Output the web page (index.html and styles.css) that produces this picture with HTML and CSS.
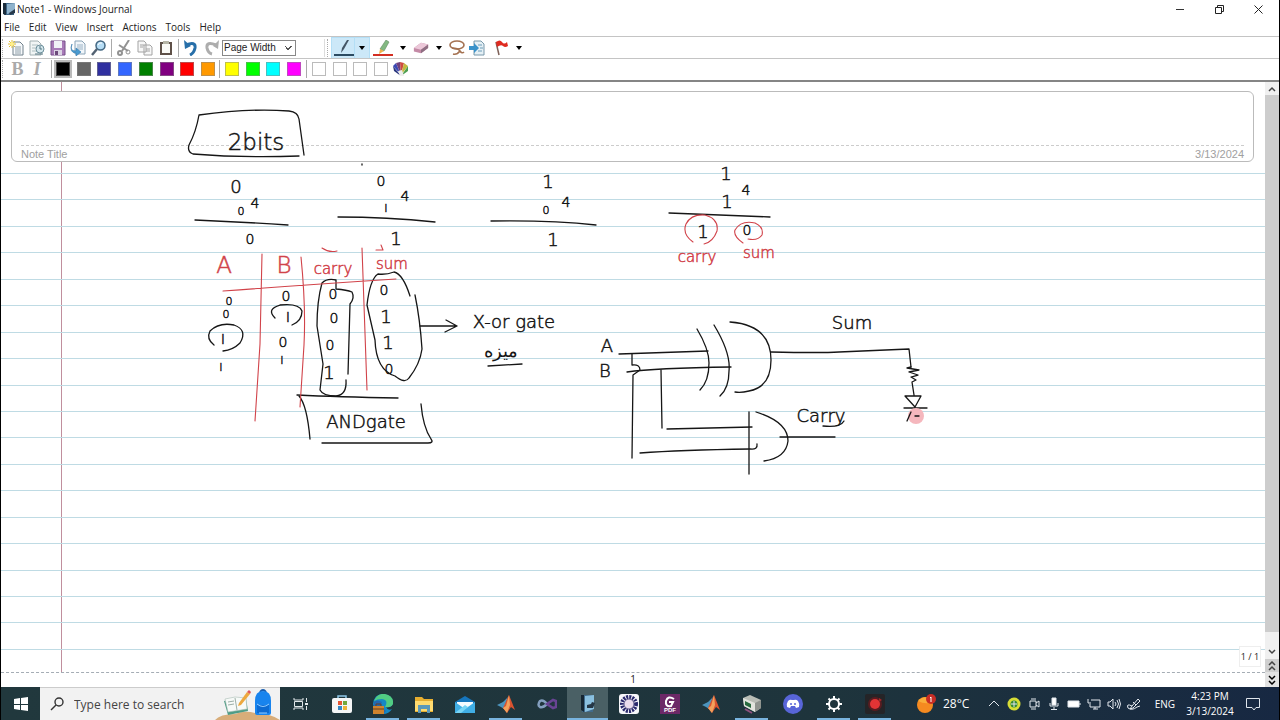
FILE: index.html
```html
<!DOCTYPE html>
<html lang="en">
<head>
<meta charset="utf-8">
<title>Note1 - Windows Journal</title>
<link rel="stylesheet" href="styles.css">
</head>
<body>
<div class="window">
  <header class="titlebar">
    <svg class="app-icon" viewBox="0 0 14 14"><path d="M1 1h11v12H2z" fill="#3d6484"/><path d="M5 2l8-1v9l-8 2z" fill="#8fb3cd"/><path d="M1 1l3 0v12l-3-1z" fill="#1b2c3b"/><path d="M7 11l6-4v4l-5 2z" fill="#27394a"/></svg>
    <h1 class="title">Note1 - Windows Journal</h1>
    <div class="win-buttons">
      <button aria-label="Minimize"><svg width="9" height="9"><path d="M0 4.500h8" stroke="#333"/></svg></button>
      <button aria-label="Restore"><svg width="9" height="9" fill="none" stroke="#222"><path d="M.5 2.500h6v6h-6zM2.500 2V.5h6v6H7"/></svg></button>
      <button aria-label="Close"><svg width="9" height="9" stroke="#222"><path d="M.5.5l8 8M8.500.5l-8 8"/></svg></button>
    </div>
  </header>
  <nav class="menubar">
    <button>File</button><button>Edit</button><button>View</button><button>Insert</button><button>Actions</button><button>Tools</button><button>Help</button>
  </nav>

  <div class="toolbar">
    <span class="grip"></span>
    <div class="tools file-tools">
      <button aria-label="New note"><svg viewBox="0 0 16 16"><path d="M5 2h7l3 3v10H5z" fill="#f7f9fb" stroke="#71818c"/><path d="M7 7h6M7 9h6M7 11h6M7 13h6" stroke="#8fa0aa"/><path d="M4 0v8M0 4h8M1 1l6 6M7 1L1 7" stroke="#e0bc36"/><circle cx="4" cy="4" r="2" fill="#fff08a"/></svg></button>
      <button aria-label="Note from template"><svg viewBox="0 0 16 16"><path d="M1 1h8l3 3v11H1z" fill="#f1f5f5" stroke="#a2b0b2"/><path d="M3 5h6M3 8h6M3 11h6" stroke="#aebfc1"/><circle cx="11" cy="9" r="4" fill="#d3e6ec" stroke="#6e909c"/><path d="M11 6v3h2M6 14h8" fill="none" stroke="#527480"/></svg></button>
      <button aria-label="Save"><svg viewBox="0 0 16 16"><path d="M1 1h14v14H1z" fill="#a87ab8" stroke="#76508a"/><path d="M4 1h8v7H4z" fill="#f1f1f7"/><path d="M4 10h8v5H4z" fill="#dbd4e4"/><path d="M5 11h3v4H5z" fill="#6c4a7b"/></svg></button>
      <button aria-label="Import"><svg viewBox="0 0 16 16"><path d="M5 1h7l3 3v10H5z" fill="#f1f6fa" stroke="#8ba4b7"/><path d="M7 5h6M7 7h6M7 9h6" stroke="#9bb3c6"/><path d="M2 4q-3 7 4 7V8l5 4-5 4v-3Q-1 13 2 4z" fill="#4a9bd1" stroke="#357bac" stroke-width=".6"/></svg></button>
      <button aria-label="Find"><svg viewBox="0 0 16 16"><path d="M6 9l-5 6" stroke="#536272" stroke-width="2.500"/><circle cx="9.500" cy="5.500" r="4.500" fill="#b6ddf5" stroke="#426681" stroke-width="1.500"/><path d="M7 5q1-3 4-2" stroke="#fff" fill="none"/></svg></button>
    </div>
    <span class="sep"></span>
    <div class="tools edit-tools">
      <button aria-label="Cut"><svg viewBox="0 0 16 16" fill="none" stroke="#929292" stroke-width="2"><path d="M13 0L6 11M3 5l9 6"/><circle cx="4" cy="13" r="2"/><circle cx="12" cy="12" r="2" stroke-width="1"/></svg></button>
      <button aria-label="Copy"><svg viewBox="0 0 16 16" fill="#f7f7f7" stroke="#a3a3a3"><path d="M1 1h6l2 2v9H1zM7 5h6l2 2v8H7z"/><path d="M3 5h4M3 7h3M9 9h4M9 11h4"/></svg></button>
      <button aria-label="Paste"><svg viewBox="0 0 16 16"><path d="M2 2h12v13H2z" fill="#5f5148"/><path d="M4 4h8v9H4z" fill="#fbfbf7"/><path d="M5 1h6v3H5z" fill="#b7b6a7"/></svg></button>
    </div>
    <span class="sep"></span>
    <div class="tools undo-tools">
      <button aria-label="Undo"><svg viewBox="0 0 16 16"><path d="M3 5q10-4 9 3-1 5-5 7" fill="none" stroke="#276fa9" stroke-width="3"/><path d="M1 0l1 9 6-3z" fill="#276fa9"/></svg></button>
      <button aria-label="Redo"><svg viewBox="0 0 16 16"><path d="M12 5q-10-4-9 3 1 5 5 6" fill="none" stroke="#adadad" stroke-width="3"/><path d="M15 0l-1 9-5-3z" fill="#adadad"/></svg></button>
    </div>
    <select class="zoom" aria-label="Zoom"><option>Page Width</option></select>
    <span class="grip second"></span>
    <div class="pen-tools">
      <button class="pen active" aria-label="Pen"><svg viewBox="0 0 20 16"><path d="M15 0l-5 9-3 4 1-5 5-8z" fill="#435565"/><path d="M0 15h20" stroke="#2b4a61" stroke-width="2"/></svg></button>
      <button class="drop active split" aria-label="Pen options"></button>
      <button class="pen" aria-label="Highlighter"><svg viewBox="0 0 20 16"><path d="M13 0l3 2-5 9-4-2z" fill="#83b982" stroke="#648c65" stroke-width=".6"/><path d="M7 9l4 2-5 3z" fill="#edb34c"/><path d="M0 15h20" stroke="#d32e22" stroke-width="2"/></svg></button>
      <button class="drop" aria-label="Highlighter options"></button>
      <button class="icon-eraser" aria-label="Eraser"><svg viewBox="0 0 18 16"><path d="M1 8l8-6 8 2v4l-8 6-8-2z" fill="#c48aa6"/><path d="M1 8l8-6 8 2-8 6z" fill="#ecc8d9"/><path d="M9 10v4l8-6V4z" fill="#8f6f83"/></svg></button>
      <button class="drop" aria-label="Eraser options"></button>
      <button aria-label="Selection"><svg viewBox="0 0 16 16" fill="none" stroke="#a47150" stroke-width="1.600"><ellipse cx="8" cy="5" rx="7" ry="4"/><path d="M3 8q6 0 8 3t4 1M11 11q-3 4-7 3"/></svg></button>
      <button aria-label="Insert space"><svg viewBox="0 0 16 16"><path d="M5 1h7l3 3v11H5z" fill="#e5f0f5" stroke="#7898aa"/><path d="M9 5h4M11 8h3M9 11h4" stroke="#6d9cb8"/><path d="M0 6h5V3l5 5-5 5v-3H0z" fill="#3992ca"/></svg></button>
      <button class="flag" aria-label="Flag"><svg viewBox="0 0 16 16"><path d="M3 2l3 13" stroke="#7e6158" stroke-width="1.500"/><path d="M3 2q4-3 6 0t5 0l1 4q-3 2-5 0T4 7z" fill="#df2b20"/></svg></button>
      <button class="drop" aria-label="Flag options"></button>
    </div>
  </div>

  <div class="toolbar formatting">
    <span class="grip"></span>
    <button class="letter bold">B</button>
    <button class="letter italic">I</button>
    <span class="sep"></span>
    <div class="swatches eight">
      <button class="swatch black chosen" aria-label="Black"></button><button class="swatch gray" aria-label="Gray"></button><button class="swatch navy" aria-label="Navy"></button><button class="swatch blue" aria-label="Blue"></button><button class="swatch green" aria-label="Green"></button><button class="swatch purple" aria-label="Purple"></button><button class="swatch red" aria-label="Red"></button><button class="swatch orange" aria-label="Orange"></button>
    </div>
    <span class="sep"></span>
    <div class="swatches four">
      <button class="swatch yellow" aria-label="Yellow"></button><button class="swatch lime" aria-label="Lime"></button><button class="swatch cyan" aria-label="Cyan"></button><button class="swatch magenta" aria-label="Magenta"></button>
    </div>
    <span class="sep"></span>
    <div class="swatches four">
      <button class="swatch empty" aria-label="Custom 1"></button><button class="swatch empty" aria-label="Custom 2"></button><button class="swatch empty" aria-label="Custom 3"></button><button class="swatch empty" aria-label="Custom 4"></button>
    </div>
    <button class="palette" aria-label="More colors"><svg viewBox="0 0 16 14"><path d="M0 4l3-3 5 12z" fill="#3b48b5"/><path d="M0 4l1 5 7 5z" fill="#28357c"/><path d="M3 1l4-1 1 13z" fill="#71407c"/><path d="M7 0l4 1-3 12z" fill="#ce4b41"/><path d="M11 1l4 3-7 9z" fill="#c4b73e"/><path d="M15 4l0 5-7 5z" fill="#4c9e50"/><path d="M5 9l4-1 2 6H7z" fill="#eee"/></svg></button>
  </div>

  <main class="workspace">
    <section class="page">
      <div class="note-head">
        <div class="note-line"></div>
        <div class="note-meta"><span>Note Title</span><time>3/13/2024</time></div>
      </div>
      <div class="rules"><i></i><i></i><i></i><i></i><i></i><i></i><i></i><i></i><i></i><i></i><i></i><i></i><i></i><i></i><i></i><i></i><i></i><i></i><i></i></div>
      <div class="page-foot">1</div>
      <span class="page-count">1 / 1</span>
      <svg class="ink" width="1264" height="604" viewBox="1 82 1264 604">
        <g class="stroke">
          <path d="M199 115q50-7 90-4 9 1 10 8l5 36M199 115q-3 17-10 30-2 7 4 9 50 4 106 2"/>
          <path d="M195 220q48 2 93 5M338 217q49 0 97 5M491 221q60-1 105 4M669 213l101 4"/>
          <path d="M362 164v1"/>
          <path d="M275 318q-9-9 5-13 19-2 22 6 0 10-10 14"/>
          <path d="M214 345q-8-6-4-14 9-9 24-6 14 5 6 18-7 7-17 8"/>
          <path d="M336 280q-9-2-14 3-5 18-5 43l6 38-3 26q3 6 16 6 11-1 10-16M336 280v9q11 1 16 3 3 6-2 12l-2 70"/>
          <path d="M410 296q-7-22-16-24-8 3-16 2-8 5-11 31l8 35q1 30 20 36 10 8 14 2 11-14 13-29-2-30-7-54"/>
          <path d="M420 326h37M446 320l11 6-12 6"/>
          <path d="M297 395q40 2 101 3M299 396q8 9 11 43M322 443h106q6 0 3-4-8-12-10-35"/>
          <path d="M488 366l34-2"/>
          <path d="M619 354l89-3M627 372q27-4 104-5"/>
          <path d="M697 329q12 20 12 34 0 18-9 27M714 325q17 28 15 46 0 17-9 25M730 322q41 3 41 38 0 27-22 31-8 2-14 1"/>
          <path d="M771 352q50 1 68 0l70-3 2 18"/>
          <path d="M632 354v11q8-1 8 5l-7 5-1 83M661 370l1 58M667 429l85-2M640 453q40-3 110-4 8 1 7-5"/>
          <path d="M749 412v62M756 412q32 10 32 29-2 17-24 20M780 437h55"/>
          <path d="M911 367l-4 1 12 2-10 2 9 3-7 2 5 3-4 2 2 13M905 396h16l-6 11zM904 408h23"/>
          <path d="M823 426q17 2 21-5"/>
        </g>
        <circle cx="916" cy="416" r="8" fill="#f5b7bd"/>
        <path class="stroke" d="M911 412l-4 9M915 416h4"/>
        <g class="stroke red-stroke">
          <path d="M223 291q95-7 173-12M262 254l-2 90-5 77M301 257q5 50 3 88l-4 62M362 248l5 142"/>
          <path d="M322 248q7 5 15 3M376 250h7l-2-5"/>
          <path d="M693 242q-11-8-7-18 5-10 19-9 14 4 12 16-4 11-13 13M743 243q-10-7-8-13 6-10 20-7 9 4 7 12-4 6-14 4"/>
        </g>
        <g class="digits">
          <text class="large" x="236" y="193">0</text><text class="small" x="241" y="215">0</text><text class="mid" x="255" y="208">4</text><text class="mid" x="250" y="244">0</text>
          <text class="mid" x="381" y="186">0</text><text class="mid" x="405" y="201">4</text><text class="mid" x="386" y="212">ı</text><text class="large" x="396" y="245">1</text>
          <text class="large" x="548" y="188">1</text><text class="small" x="546" y="214">0</text><text class="mid" x="566" y="207">4</text><text class="large" x="553" y="246">1</text>
          <text class="large" x="726" y="180">1</text><text class="mid" x="746" y="195">4</text><text class="large" x="727" y="208">1</text><text class="large" x="703" y="238">1</text><text class="mid" x="747" y="235">0</text>
          <text class="small" x="229" y="305">0</text><text class="mid" x="286" y="301">0</text><text class="mid" x="333" y="299">0</text><text class="mid" x="384" y="295">0</text>
          <text class="small" x="226" y="318">0</text><text class="large" x="288" y="322">ı</text><text class="mid" x="334" y="323">0</text><text class="large" x="386" y="323">1</text>
          <text class="large" x="223" y="344">ı</text><text class="mid" x="283" y="347">0</text><text class="mid" x="330" y="350">0</text><text class="large" x="388" y="349">1</text>
          <text class="mid" x="221" y="371">ı</text><text class="mid" x="282" y="364">ı</text><text class="large" x="329" y="379">1</text><text class="mid" x="389" y="374">0</text>
        </g>
        <g class="words">
          <text class="heading" x="256" y="150">2bits</text>
          <text x="366" y="428">ANDgate</text>
          <text x="514" y="328">X-or gate</text>
          <text class="arabic" x="501" y="357">ميزه</text>
          <text x="607" y="352">A</text>
          <text x="605" y="377">B</text>
          <text x="852" y="329">Sum</text>
          <text x="821" y="422">Carry</text>
        </g>
        <g class="words red-words">
          <text class="heading" x="224" y="273">A</text>
          <text class="heading" x="284" y="273">B</text>
          <text x="333" y="274">carry</text>
          <text x="392" y="269">sum</text>
          <text x="697" y="262">carry</text>
          <text x="759" y="258">sum</text>
        </g>
      </svg>
    </section>
    <aside class="scrollbar">
      <button aria-label="Scroll up"><svg width="8" height="6"><path d="M1 5l3-3 3 3"/></svg></button>
      <div class="thumb"></div>
      <button class="down" aria-label="Scroll down"><svg width="8" height="6"><path d="M1 1l3 3 3-3"/></svg></button>
      <button class="page-up" aria-label="Previous page"><svg width="8" height="10"><path d="M1 4l3-3 3 3M1 9l3-3 3 3"/></svg></button>
      <button class="page-down" aria-label="Next page"><svg width="8" height="10"><path d="M1 1l3 3 3-3M1 6l3 3 3-3"/></svg></button>
    </aside>
  </main>

  <footer class="taskbar">
    <button class="task start" aria-label="Start"><svg viewBox="0 0 14 14" fill="#fff"><path d="M0 2l6-1v6H0zM7 1l7-1v7H7zM0 8h6v5l-6-1zM7 8h7v6l-7-1z"/></svg></button>
    <div class="search">
      <svg class="lens" viewBox="0 0 14 14" fill="none" stroke="#333" stroke-width="1.400"><circle cx="9" cy="5" r="4"/><path d="M6 8l-5 5"/></svg>
      <input type="text" aria-label="Search" placeholder="Type here to search">
      <svg class="doodle" viewBox="0 0 65 32"><path d="M0 32q5-6 20-6 10-4 20-1 17 1 25 7z" fill="#d8ad79"/><path d="M9 13l11-3 11 1 2 12-20 4z" fill="#4e9c85"/><path d="M10 11l10-2 11 1 1 11-19 3z" fill="#f7faf8" stroke="#a9bdb5" stroke-width=".6"/><path d="M20 10l2 12M13 14l6-1M13 17l6-1" stroke="#9caea7"/><path d="M32 4l3 2-9 11-3 1 1-3z" fill="#eda83f"/><path d="M32 4l2-2 2 2-1 2z" fill="#df5457"/><path d="M45 4q3-4 6 0" fill="none" stroke="#155bae" stroke-width="2"/><path d="M40 13q0-10 8-10t8 10v12q0 2-2 2H42q-2 0-2-2z" fill="#1884ee"/><path d="M42 17h12v8H42z" fill="#0d6bd2"/><path d="M42 16q6 5 12 0M44 25h8" fill="none" stroke="#93cdff"/></svg>
    </div>
    <div class="apps">
      <button class="task" aria-label="Task view"><svg viewBox="0 0 16 16" fill="none" stroke="#e2e8ea"><path d="M1 2v2h9V2M1 14v-2h9v2M1.500 5.500h8v5h-8zM13.500 2v4M13.500 10v4"/><path d="M12 8h3" stroke-width="2"/></svg></button>
      <button class="task" aria-label="Store"><svg viewBox="0 0 20 20"><path d="M6 6V2h8v4" fill="none" stroke="#8fc8e7" stroke-width="1.500"/><rect y="4" width="20" height="15" rx="2" fill="#f5f6f6"/><path d="M6 7h4v4H6z" fill="#e65634"/><path d="M11 7h4v4h-4z" fill="#73a83b"/><path d="M6 12h4v4H6z" fill="#3487c5"/><path d="M11 12h4v4h-4z" fill="#eeb43a"/></svg></button>
      <button class="task open" aria-label="Edge"><svg viewBox="0 0 20 20"><path d="M0 10Q1 0 10 0q10 1 10 9-1 5-7 4 2 4 6 2-3 5-9 5Q1 19 0 10z" fill="#1588c5"/><path d="M1 7q3-8 11-7 9 2 8 10-2 4-8 3 4-7-3-8-5 0-8 2z" fill="#51cc83"/><path d="M9 8q-3 6 4 9l-3 3Q0 18 1 8q3-3 8 0z" fill="#2467b0"/><path d="M0 12h11v8H0z" fill="#cf832e"/><path d="M0 15h11M3 12v-2h5v2" fill="none" stroke="#6b401e"/></svg></button>
      <button class="task open" aria-label="File Explorer"><svg viewBox="0 0 20 20"><path d="M1 3h7l2 2h9v13H1z" fill="#e7ae30"/><path d="M1 7h18v10H1z" fill="#ffdb70"/><path d="M4 11h12v8h-3v-4H7v4H4z" fill="#5c98b9"/></svg></button>
      <button class="task" aria-label="Mail"><svg viewBox="0 0 20 20"><path d="M0 8l10-6 10 6v11H0z" fill="#1676bd"/><path d="M2 8h16v8H2z" fill="#f5fbff"/><path d="M0 8l10 7 10-7v11H0z" fill="#40aee5"/><path d="M0 19l10-8 3 2-7 6z" fill="#78d5f5"/></svg></button>
      <button class="task open" aria-label="MATLAB"><svg viewBox="0 0 20 20"><path d="M1 11l6-3 5-5-4 12-3-2z" fill="#4c94bd"/><path d="M13 1l6 15-4-3-4 6-4-5z" fill="#d95330"/><path d="M13 1l1 10-3 8-4-5 3-2z" fill="#f3a15c"/></svg></button>
      <button class="task" aria-label="Visual Studio"><svg viewBox="0 0 20 20" fill="none" stroke-width="2.500"><path d="M10 10q-4-5-7-3-3 4 0 6 3 1 7-3" stroke="#849fbf"/><path d="M10 10l6-4 3 1v6l-3 1z" stroke="#684494"/></svg></button>
      <button class="task open selected" aria-label="Windows Journal"><svg viewBox="0 0 20 20"><path d="M3 1h12v17H4z" fill="#416b8c"/><path d="M7 2l9-1v14l-9 3z" fill="#8ac0df"/><path d="M3 1h3v17l-3-2z" fill="#162632"/><path d="M9 11l4-1 1-2 3 1-2 5H9z" fill="#263746"/></svg></button>
      <button class="task" aria-label="Simulator"><svg viewBox="0 0 20 20"><rect width="20" height="20" rx="3" fill="#f7f7fb"/><circle cx="10" cy="10" r="7" fill="none" stroke="#29286c" stroke-width="4" stroke-dasharray="2 1"/><circle cx="10" cy="10" r="5" fill="#eadced" stroke="#5b5789"/></svg></button>
      <button class="task" aria-label="PDF"><svg viewBox="0 0 20 20"><path d="M0 0h20v20H0z" fill="#6c2867"/><path d="M14 5q-6-4-8 2-1 6 5 5l2-4h-4" fill="none" stroke="#fff" stroke-width="2"/><text x="10" y="18" class="pdf-label">PDF</text></svg></button>
      <button class="task" aria-label="MATLAB 2"><svg viewBox="0 0 20 20"><path d="M1 11l6-3 5-5-4 12-3-2z" fill="#4c94bd"/><path d="M13 1l6 15-4-3-4 6-4-5z" fill="#d95330"/><path d="M13 1l1 10-3 8-4-5 3-2z" fill="#f3a15c"/></svg></button>
      <button class="task open" aria-label="Hardware"><svg viewBox="0 0 20 20"><path d="M1 4l7-3 11 5v8l-6 4L2 12z" fill="#b9bdb6"/><path d="M1 4l12 5v9L2 12z" fill="#e2e5de"/><path d="M3 7l6 3v4l-6-3z" fill="#276a3e"/><path d="M13 9l6-3v8l-6 4z" fill="#8f948f"/><path d="M3 15l7 4" stroke="#8e527f" stroke-width="2"/></svg></button>
      <button class="task" aria-label="Discord"><svg viewBox="0 0 20 20"><circle cx="10" cy="10" r="10" fill="#5865d8"/><path d="M5 7q2-2 4-1h2q2-1 4 1 2 3 1 6l-3 1-1-2H8l-1 2-3-1q-1-3 1-6z" fill="#fff"/><circle cx="8" cy="10" r="1" fill="#5865d8"/><circle cx="12" cy="10" r="1" fill="#5865d8"/></svg></button>
      <button class="task open" aria-label="Settings"><svg viewBox="0 0 20 20" fill="none" stroke="#fff"><circle cx="10" cy="10" r="5" stroke-width="2"/><path d="M10 2v3M10 15v3M2 10h3M15 10h3M4.500 4.500l2 2M13.500 13.500l2 2M15.500 4.500l-2 2M6.500 13.500l-2 2" stroke-width="2"/></svg></button>
      <button class="task open" aria-label="Recorder"><svg viewBox="0 0 20 20"><rect width="20" height="20" rx="2" fill="#252427"/><circle cx="10" cy="10" r="7" fill="#591c20"/><circle cx="10" cy="10" r="5" fill="#e33435"/><path d="M14 4l3 2-3 2" fill="#a32729"/></svg></button>
    </div>
    <button class="weather"><svg viewBox="0 0 20 20"><circle cx="8" cy="11" r="8" fill="#f58a20"/><path d="M1 7q8-8 14 1-6 3-14-1z" fill="#f9ad38"/><circle cx="14" cy="5" r="5" fill="#c72d25"/><path d="M13 4l1-1v5" stroke="#fff" fill="none"/></svg><span>28°C</span></button>
    <div class="tray">
      <svg viewBox="0 0 14 14"><path d="M2 9l5-5 5 5"/></svg>
      <svg viewBox="0 0 14 14"><circle cx="7" cy="7" r="6.500" fill="#d7dd36" stroke="none"/><circle cx="7" cy="7" r="3.500" fill="#368936" stroke="none"/><path d="M7 4v6M4 7h6"/></svg>
      <svg viewBox="0 0 14 14"><path d="M3 4h6v6H3zM9 6l3-2v6L9 8M4 2h5M4 12h5"/></svg>
      <svg viewBox="0 0 14 14"><path d="M5 1h4v7H5z" fill="#fff"/><path d="M3 6v3h8V6M7 10v2M4 12.500h6"/></svg>
      <svg viewBox="0 0 14 14"><path d="M1 4h11v6H1z" fill="#fff"/><path d="M13 6v2"/></svg>
      <svg viewBox="0 0 14 14"><path d="M4 3h9v7H3V7M1 2v4h3M6 12h5M8 10v2"/></svg>
      <svg viewBox="0 0 14 14"><path d="M1 5h2l3-3v10L3 9H1zM8 5q2 2 0 4M10 3q3 4 0 8M12 2q3 5 0 10"/></svg>
      <svg viewBox="0 0 14 14"><path d="M5 9l6-7 2 2-7 7-3 1zM5 9Q-1 6 1 11q4 3 9-1l3-1M6 5l3 3"/></svg>
      <span class="lang">ENG</span>
    </div>
    <div class="clock"><span>4:23 PM</span><span>3/13/2024</span></div>
    <button class="notify" aria-label="Notifications"><svg viewBox="0 0 14 14" fill="none" stroke="#dfe5ec"><path d="M.5 1.500h13v9H10L8 13l-2-2.500H.5z"/></svg></button>
  </footer>
</div>
</body>
</html>
```

FILE: styles.css
```css
* { box-sizing: border-box; }
body { margin: 0; font-family: "Open Sans", "Noto Sans", sans-serif; font-size: 10px; color: #222; background: #000; }
button { margin: 0; padding: 0; border: 0; background: none; font: inherit; color: inherit; display: flex; align-items: center; justify-content: center; }
svg { display: block; flex: none; }

.window { min-height: 100vh; display: flex; flex-direction: column; background: #fff; border-left: 1px solid #000; border-right: 1px solid #000; }

.titlebar { height: 18px; display: flex; align-items: center; padding-left: 1px; }
.app-icon { width: 14px; height: 14px; }
.title { margin: 0 auto 0 1px; font-size: 10px; font-weight: 400; }
.win-buttons { display: flex; margin-right: 1px; }
.win-buttons button { width: 39px; height: 18px; }
.menubar { height: 18px; display: flex; align-items: center; gap: 9px; padding-left: 3px; }

.toolbar { height: 22px; display: flex; align-items: center; border-top: 1px solid #c4c4c4; padding-left: 1px; }
.formatting { height: 24px; border-bottom: 2px solid #858585; }
.formatting > * { margin-bottom: 1px; }
.grip { width: 2px; height: 18px; border-left: 1px dotted #aaa; margin-right: 4px; }
.grip.second { width: 4px; border-left: 1px solid #ddd; border-right: 1px dotted #aaa; margin: 0 4px 0 28px; }
.sep { width: 1px; height: 18px; background: #aaa; }
.tools { display: flex; justify-content: space-between; }
.tools svg, .pen-tools svg { width: 16px; height: 16px; }
.file-tools { width: 99px; margin-right: 4px; }
.edit-tools { width: 58px; margin: 0 4px; }
.undo-tools { width: 37px; margin: 0 2px 0 4px; }
.zoom { width: 74px; height: 16px; padding: 0 0 0 1px; border: 1px solid #888; border-radius: 0; background: #fff; color: #222; font: 10px "Liberation Sans", sans-serif; appearance: none; background-image: linear-gradient(45deg, transparent 50%, #555 50%, #555 65%, transparent 65%), linear-gradient(-45deg, transparent 50%, #555 50%, #555 65%, transparent 65%); background-size: 4px 4px; background-position: right 7px center, right 3px center; background-repeat: no-repeat; }
.pen-tools { display: flex; align-items: center; gap: 2px; }
.pen-tools button { height: 20px; width: 18px; }
.pen-tools .pen { width: 23px; }
.pen-tools .pen svg { width: 20px; }
.pen-tools .active { background: #cce8f8; outline: 1px solid #b4dff6; }
.pen-tools .split { margin-left: -2px; }
.pen-tools .drop { width: 14px; }
.pen-tools .flag { margin-left: 4px; }
.drop::after { content: ""; border: 3px solid transparent; border-top: 4px solid #000; border-bottom: 0; }
.letter { width: 19px; font: bold 18px "Liberation Serif", serif; color: #aaa; }
.italic { font-style: italic; width: 20px; margin-right: 4px; }
.swatches { display: flex; align-items: center; justify-content: space-between; }
.swatches.eight { width: 159px; margin-left: 4px; margin-right: 4px; }
.swatches.four { width: 76px; margin-left: 5px; margin-right: 5px; }
.swatch { width: 14px; height: 14px; border: 1px solid #8888; }
.chosen { outline: 2px solid #bbb; }
.black { background: #000; }
.gray { background: #666; }
.navy { background: #3030a0; }
.blue { background: #3366ff; }
.green { background: #008000; }
.purple { background: #800080; }
.red { background: #f00; }
.orange { background: #ff9900; }
.yellow { background: #ff0; }
.lime { background: #0f0; }
.cyan { background: #0ff; }
.magenta { background: #f0f; }
.empty { border-color: #bbb; background: #fff; }
.palette svg { width: 16px; height: 14px; }

.workspace { flex: 1; display: flex; }
.page { flex: 1; min-width: 0; position: relative; overflow: hidden; display: flex; flex-direction: column; background: linear-gradient(#c08f9d, #c08f9d) 60px 0 / 1px calc(100% - 14px) no-repeat #fff; }
.note-head { height: 71px; margin: 9px 11px 11px 10px; padding: 0 9px; display: flex; flex-direction: column; justify-content: flex-end; border: 1px solid #bbb; border-radius: 6px; background: #fff; }
.note-line { border-top: 1px dashed #ccc; }
.note-meta { height: 15px; display: flex; justify-content: space-between; align-items: center; font: 11px "Liberation Sans", sans-serif; color: #a0a0a0; }
.rules { flex: 1; display: flex; flex-direction: column; justify-content: space-between; padding-bottom: 22px; border-bottom: 1px dashed #a5adb5; }
.rules i { height: 1px; background: #bfdbe4; }
.page-foot { height: 14px; line-height: 13px; text-align: center; }
.page-count { position: absolute; right: 4px; bottom: 20px; width: 22px; height: 21px; line-height: 19px; text-align: center; font-size: 9px; background: #fff; border: 1px solid #eee; }
.ink { position: absolute; left: 0; top: 0; }
.stroke { fill: none; stroke: #161616; stroke-width: 1.3; stroke-linecap: round; stroke-linejoin: round; }
.red-stroke { stroke: #d1434a; stroke-width: 1.1; }
.ink text { text-anchor: middle; fill: #161616; stroke: #161616; stroke-width: 0.5; font-family: "DejaVu Sans", sans-serif; font-weight: 200; }
.digits .small { font-size: 11px; }
.digits .mid { font-size: 14px; }
.digits .large { font-size: 18px; }
.words text { font-size: 18px; }
.words .heading { font-size: 23px; }
.words .arabic { font-size: 18px; stroke: none; }
.ink .red-words text { fill: #d1434a; stroke: #d1434a; font-size: 15px; }
.ink .red-words .heading { font-size: 23px; }

.scrollbar { width: 14px; display: flex; flex-direction: column; background: #f0f0f0; }
.scrollbar button { height: 13px; }
.scrollbar svg { fill: none; stroke: #444; stroke-width: 1.5; }
.thumb { flex: 1; background: #cdcdcd; margin-bottom: 13px; }
.scrollbar .down { height: 14px; }
.scrollbar .page-up { background: #cfcfcf; }
.scrollbar .page-down { height: 15px; background: #e3e3e3; }
.scrollbar .page-down svg { stroke: #000; }

.taskbar { height: 33px; display: flex; background: linear-gradient(90deg, #21383d, #1e343c 65%, #172842); color: #fff; }
.task { position: relative; height: 33px; }
.start { width: 39px; }
.task svg { width: 20px; height: 20px; }
.start svg { width: 14px; height: 14px; }
.search { width: 240px; display: flex; align-items: center; background: #f2f2f2; border-top: 1px solid #ccc; }
.lens { width: 14px; height: 14px; margin: 0 10px 0 10px; }
.search input { flex: 1; min-width: 0; padding: 0; border: 0; outline: 0; background: none; font: 12px "Open Sans", "Noto Sans", sans-serif; color: #444; }
.search input::placeholder { color: #444; opacity: 1; }
.doodle { width: 65px; height: 32px; }
.apps { width: 615px; display: grid; grid-template-columns: repeat(15, 1fr); }
.apps .task:first-child svg { width: 16px; height: 16px; }
.open::after { content: ""; position: absolute; left: 4px; right: 4px; bottom: 0; height: 2px; background: #79b4df; }
.selected { background: #4a6065; }
.selected::after { left: 0; right: 0; }
.pdf-label { font: bold 6px "Liberation Sans", sans-serif; fill: #fff; text-anchor: middle; }
.weather { gap: 6px; margin-left: 22px; font-size: 12px; }
.weather svg { width: 20px; height: 20px; }
.tray { display: flex; align-items: center; gap: 6px; margin-left: auto; }
.tray svg { width: 14px; height: 14px; fill: none; stroke: #e2e7ed; stroke-width: 1; }
.lang { margin-left: 8px; }
.clock { width: 56px; margin: 0 8px 0 7px; display: flex; flex-direction: column; justify-content: center; text-align: center; line-height: 15px; }
.notify { width: 14px; margin-right: 19px; }
.notify svg { width: 14px; height: 14px; }
```
